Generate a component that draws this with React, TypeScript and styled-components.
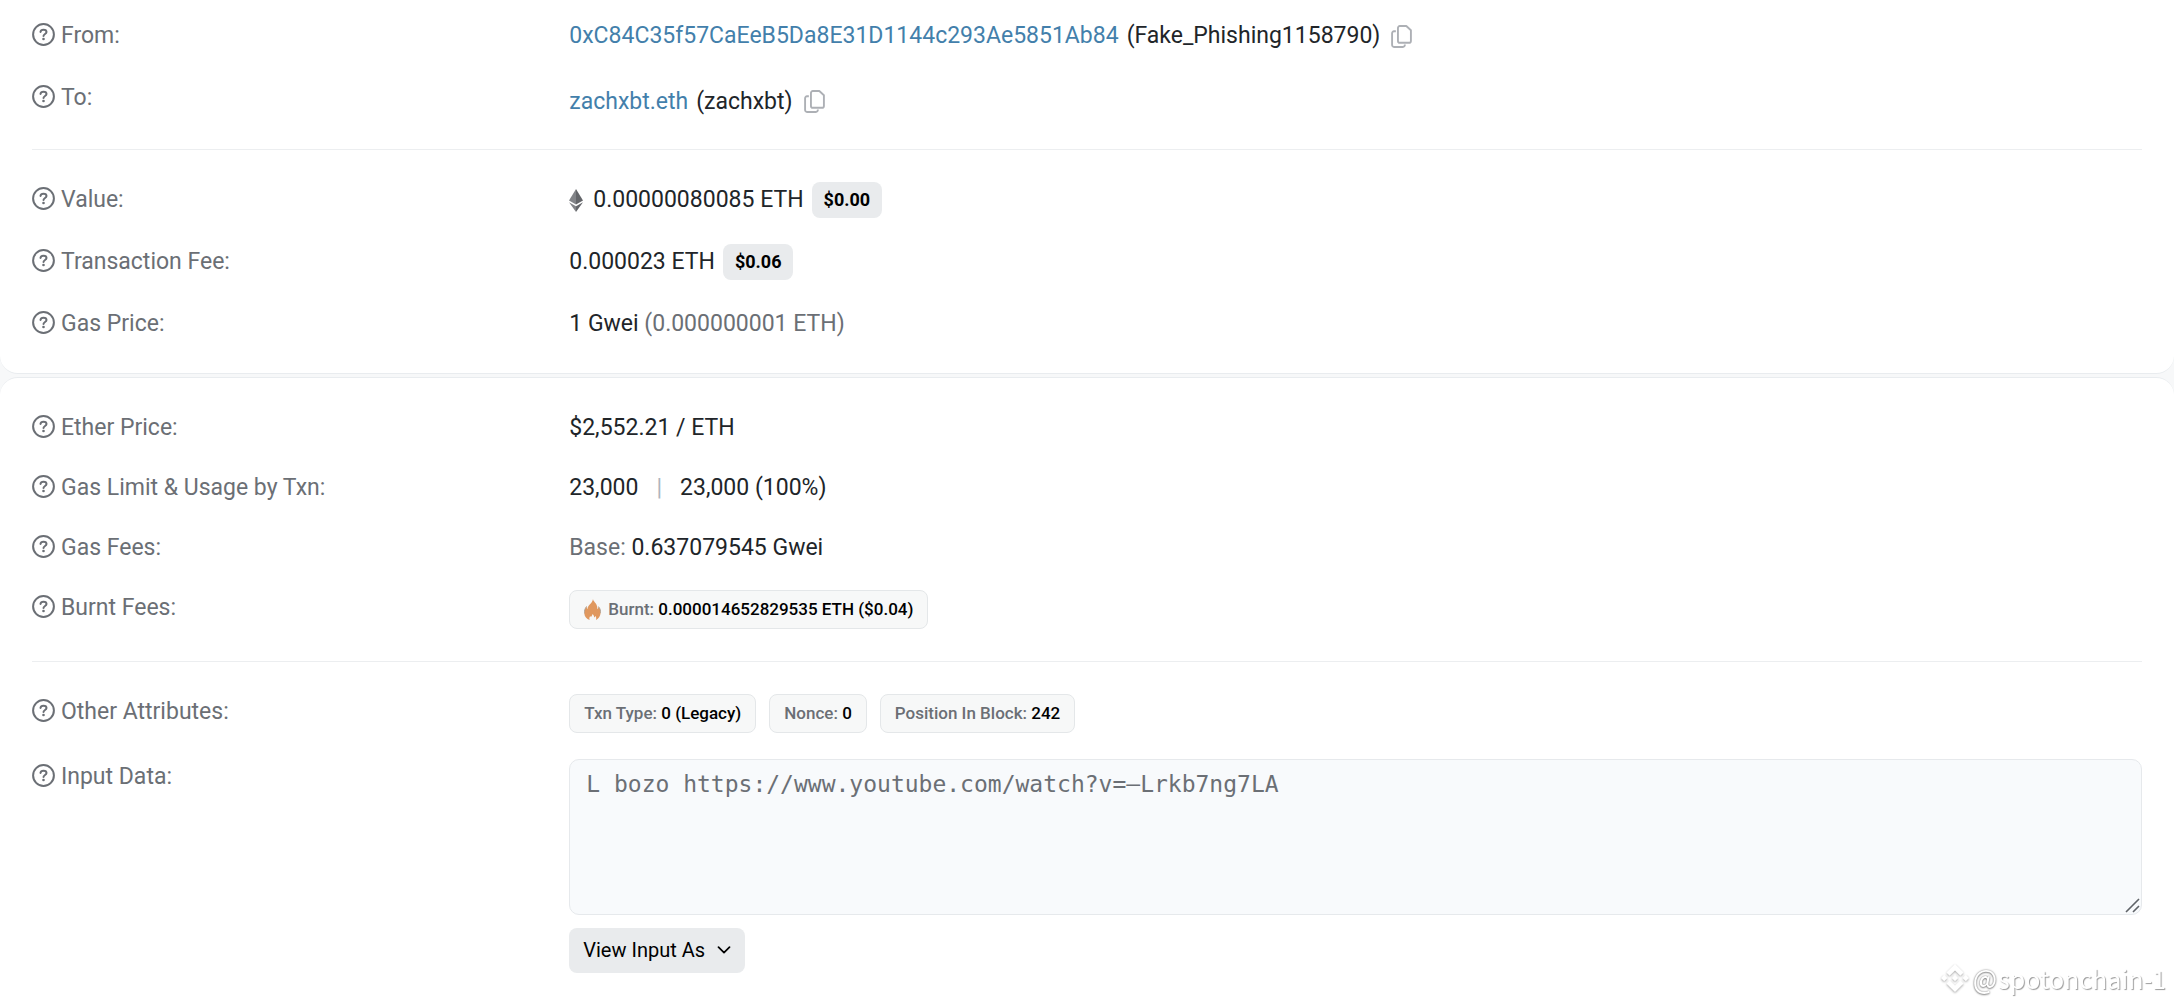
import React from 'react';
import styled, { createGlobalStyle } from 'styled-components';

const GlobalStyle = createGlobalStyle`
  *, *::before, *::after { box-sizing: border-box; }
  body {
    margin: 0;
    background: #f7f8f9;
    color: #212529;
    font-family: Roboto, "Liberation Sans", sans-serif;
    font-size: 23px;
    line-height: 36px;
  }
`;

const Page = styled.main`
  display: flex;
  flex-direction: column;
  gap: 3px;
  min-height: 100vh;
`;

const Card = styled.section<{ $last?: boolean }>`
  padding: ${(p) => (p.$last ? '32px 32px 28px' : '18px 32px 31px')};
  background: #fff;
  border: 0 solid #e9ecef;
  border-width: ${(p) => (p.$last ? '1px 0 0' : '0 0 1px')};
  border-radius: ${(p) => (p.$last ? '18px 18px 0 0' : '0 0 18px 18px')};
  flex-grow: ${(p) => (p.$last ? 1 : 0)};
`;

const Group = styled.dl<{ $gap: number }>`
  display: flex;
  flex-direction: column;
  gap: ${(p) => p.$gap}px;
  margin: 0;
`;

const Divider = styled.hr<{ $top: number }>`
  height: 1px;
  margin: ${(p) => p.$top}px 0 32px;
  border: 0;
  background: #eceef0;
`;

const Row = styled.div`
  display: grid;
  grid-template-columns: minmax(0, 1fr) minmax(0, 3fr);
  column-gap: 13px;
  align-items: start;
`;

const Term = styled.dt`
  display: flex;
  align-items: flex-start;
  gap: 6px;
  color: #6b6f75;

  svg { flex: none; margin-top: 5px; }
`;

const Detail = styled.dd<{ $height?: number }>`
  display: flex;
  flex-wrap: wrap;
  align-items: center;
  gap: 8px;
  min-height: ${(p) => p.$height ?? 36}px;
  margin: 0;
`;

const Stack = styled.dd`
  display: flex;
  flex-direction: column;
  align-items: flex-start;
  gap: 13px;
  margin: 0;
`;

const Address = styled.a`
  color: #437fab;
  text-decoration: none;
`;

const Amount = styled.span`
  display: flex;
  align-items: center;
  gap: 10px;
`;

const Muted = styled.span`
  color: #6b6f75;
`;

const Separator = styled.span`
  padding: 0 10px;
  color: #adb5bd;
`;

const CopyButton = styled.button`
  display: flex;
  padding: 0 3px;
  border: 0;
  background: none;
  color: #adb0b5;
  cursor: pointer;
`;

const Price = styled.span`
  padding: 0 12px;
  border-radius: 8px;
  background: #e9ebed;
  color: #000;
  font-size: 18px;
  font-weight: 700;
  line-height: 36px;
`;

const Chips = styled.div`
  display: flex;
  flex-wrap: wrap;
  gap: 13px;
`;

const Chip = styled.span`
  display: flex;
  align-items: center;
  gap: 7px;
  padding: 0 14px;
  border: 1px solid #e4e7e9;
  border-radius: 8px;
  background: #f7f8f8;
  color: #6b6f75;
  font-size: 17px;
  font-weight: 500;
  line-height: 37px;

  strong { color: #000; font-weight: 500; }
`;

const InputWrap = styled.div`
  position: relative;
  width: 100%;
`;

const InputBox = styled.textarea`
  display: block;
  width: 100%;
  height: 156px;
  padding: 7px 16px;
  border: 1px solid #e6e9ec;
  border-radius: 10px;
  background: #f8fafc;
  color: #6b6f75;
  font-family: "DejaVu Sans Mono", monospace;
  font-size: 23px;
  line-height: 34px;
  resize: vertical;
  outline: none;

  &::-webkit-resizer { background: transparent; }
`;

const Grip = styled.svg`
  position: absolute;
  right: 2px;
  bottom: 2px;
  pointer-events: none;
`;

const ViewButton = styled.button`
  display: flex;
  align-items: center;
  gap: 12px;
  padding: 0 14px;
  border: 0;
  border-radius: 8px;
  background: #e9ebed;
  color: #000;
  font-family: inherit;
  font-size: 20px;
  line-height: 45px;
  cursor: pointer;
`;

const Watermark = styled.div`
  position: fixed;
  right: 8px;
  bottom: 8px;
  display: flex;
  align-items: center;
  color: #fff;
  font-family: "Noto Sans CJK SC", sans-serif;
  font-size: 25px;
  text-shadow: 1px 1px 1px rgba(0, 0, 0, 0.4);
  pointer-events: none;

  svg { filter: drop-shadow(0 1px 1px rgba(0, 0, 0, 0.35)); }
`;

const AtSign = styled.span`
  padding: 0 1px 0 4px;
  font-weight: 500;
  text-shadow: 0 0 2px rgba(0, 0, 0, 0.5), 0 1px 2px rgba(0, 0, 0, 0.4);
`;

const HelpIcon = () => (
  <svg width="23" height="23" viewBox="0 0 23 23" fill="none" stroke="currentColor" strokeWidth="2" aria-hidden="true">
    <circle cx="11.5" cy="11.5" r="10.4" />
    <path d="M8.500 8.900C8.700 7.400 9.800 6.700 11.500 6.700c1.800 0 3 .9 3 2.400 0 1.900-3 2-3 4" strokeLinecap="round" />
    <circle cx="11.5" cy="16" r="1.300" fill="currentColor" stroke="none" />
  </svg>
);

const CopyIcon = () => (
  <svg width="21" height="23" viewBox="0 0 20 22" fill="none" stroke="currentColor" strokeWidth="1.8" aria-hidden="true">
    <path d="M8.400 1h6.200L19 5v10.200a1.800 1.800 0 0 1-1.800 1.800H8.400a1.800 1.800 0 0 1-1.800-1.800V2.800A1.800 1.800 0 0 1 8.400 1Z" strokeLinejoin="round" />
    <path d="M4.600 6H2.800A1.800 1.800 0 0 0 1 7.800v11.400A1.800 1.800 0 0 0 2.800 21h8.600a1.800 1.800 0 0 0 1.800-1.800V18.600" />
  </svg>
);

const EtherIcon = () => (
  <svg width="14" height="23" viewBox="0 0 14 23" aria-hidden="true">
    <path d="M7 0 0 11.500 7 15.600Z" fill="#828488" />
    <path d="M7 0 14 11.500 7 15.600Z" fill="#64666a" />
    <path d="M0 13.200 7 17.300V23Z" fill="#828488" />
    <path d="M14 13.200 7 17.300V23Z" fill="#64666a" />
  </svg>
);

const FlameIcon = () => (
  <svg width="17" height="21" viewBox="0 0 17 20" preserveAspectRatio="none" aria-hidden="true">
    <path
      d="M9 0C9.200 2.400 12.600 3.800 13.200 7.400c.2 1 .1 1.700-.1 2.400.9-.5 1.300-1.400 1.400-2.600C16 9 16.900 10.800 16.600 13.400c-.3 3-2 5.300-4.600 6.600.5-1.400.3-2.700-.7-3.700-.3.700-.7 1.100-1.200 1.300.1-1.400-.5-2.700-1.700-3.400-.1 1.500-.8 2.100-1.500 3-.3-.4-.5-.7-.6-1.100-1 1.200-1.200 2.500-.6 3.900C2.500 18.800.6 16.600.3 13.700 0 11 1.200 8.900 2.600 7c0 1.200.2 2 .9 2.700C3.500 5.500 8.400 4.500 9 0Z"
      fill="#e0985f"
    />
    <path d="M2.600 7C1.200 8.900 0 11 .3 13.700M14.500 7.200c1.500 1.800 2.400 3.600 2.100 6.200" fill="none" stroke="#a9a29b" strokeWidth="0.8" />
  </svg>
);

const ChevronIcon = () => (
  <svg width="14" height="9" viewBox="0 0 14 9" fill="none" stroke="currentColor" strokeWidth="1.700" strokeLinecap="round" strokeLinejoin="round" aria-hidden="true">
    <path d="m1.500 1.200 5.500 5.500 5.500-5.500" />
  </svg>
);

const DiamondLogo = () => (
  <svg width="28" height="28" viewBox="0 0 28 28" fill="#fff" aria-hidden="true">
    <path d="m14 0 8.600 8.600-3.200 3.200L14 6.400l-5.400 5.400-3.200-3.200Z" />
    <path d="m14 28 8.600-8.600-3.200-3.200-5.400 5.400-5.400-5.400-3.200 3.200Z" />
    <path d="m0 14 3.200-3.200L6.400 14l-3.200 3.200ZM21.600 14l3.200-3.200L28 14l-3.200 3.200ZM10.800 14l3.200-3.200 3.200 3.200-3.200 3.200Z" />
  </svg>
);

const Label = ({ children }: { children: React.ReactNode }) => (
  <Term>
    <HelpIcon />
    {children}
  </Term>
);

export default function App() {
  return (
    <>
      <GlobalStyle />
      <Page>
        <Card>
          <Group $gap={26}>
            <Row>
              <Label>From:</Label>
              <Detail>
                <Address href="#from">0xC84C35f57CaEeB5Da8E31D1144c293Ae5851Ab84</Address>
                <span>(Fake_Phishing1158790)</span>
                <CopyButton type="button" aria-label="Copy sender address"><CopyIcon /></CopyButton>
              </Detail>
            </Row>
            <Row>
              <Label>To:</Label>
              <Detail $height={43}>
                <Address href="#to">zachxbt.eth</Address>
                <span>(zachxbt)</span>
                <CopyButton type="button" aria-label="Copy recipient address"><CopyIcon /></CopyButton>
              </Detail>
            </Row>
          </Group>
          <Divider $top={26} />
          <Group $gap={26}>
            <Row>
              <Label>Value:</Label>
              <Detail>
                <Amount><EtherIcon />0.00000080085 ETH</Amount>
                <Price>$0.00</Price>
              </Detail>
            </Row>
            <Row>
              <Label>Transaction Fee:</Label>
              <Detail>
                <span>0.000023 ETH</span>
                <Price>$0.06</Price>
              </Detail>
            </Row>
            <Row>
              <Label>Gas Price:</Label>
              <Detail>
                <span>1 Gwei <Muted>(0.000000001 ETH)</Muted></span>
              </Detail>
            </Row>
          </Group>
        </Card>
        <Card $last>
          <Group $gap={24}>
            <Row>
              <Label>Ether Price:</Label>
              <Detail>$2,552.21 / ETH</Detail>
            </Row>
            <Row>
              <Label>Gas Limit &amp; Usage by Txn:</Label>
              <Detail>
                <span>23,000</span>
                <Separator>|</Separator>
                <span>23,000 (100%)</span>
              </Detail>
            </Row>
            <Row>
              <Label>Gas Fees:</Label>
              <Detail>
                <span><Muted>Base:</Muted> 0.637079545 Gwei</span>
              </Detail>
            </Row>
            <Row>
              <Label>Burnt Fees:</Label>
              <Detail>
                <Chip>
                  <FlameIcon />
                  <span>Burnt: <strong>0.000014652829535 ETH ($0.04)</strong></span>
                </Chip>
              </Detail>
            </Row>
          </Group>
          <Divider $top={32} />
          <Group $gap={26}>
            <Row>
              <Label>Other Attributes:</Label>
              <Detail>
                <Chips>
                  <Chip><span>Txn Type: <strong>0 (Legacy)</strong></span></Chip>
                  <Chip><span>Nonce: <strong>0</strong></span></Chip>
                  <Chip><span>Position In Block: <strong>242</strong></span></Chip>
                </Chips>
              </Detail>
            </Row>
            <Row>
              <Label><label htmlFor="input-data">Input Data:</label></Label>
              <Stack>
                <InputWrap>
                  <InputBox id="input-data" readOnly spellCheck={false} defaultValue="L bozo https://www.youtube.com/watch?v=–Lrkb7ng7LA" />
                  <Grip width="15" height="15" viewBox="0 0 15 15" fill="none" stroke="#5f6368" strokeWidth="1.6" aria-hidden="true">
                    <path d="M1 14 14 1M8 14l6-6" />
                  </Grip>
                </InputWrap>
                <ViewButton type="button">View Input As <ChevronIcon /></ViewButton>
              </Stack>
            </Row>
          </Group>
        </Card>
      </Page>
      <Watermark>
        <DiamondLogo />
        <AtSign>@</AtSign>
        <span>spotonchain-1</span>
      </Watermark>
    </>
  );
}
